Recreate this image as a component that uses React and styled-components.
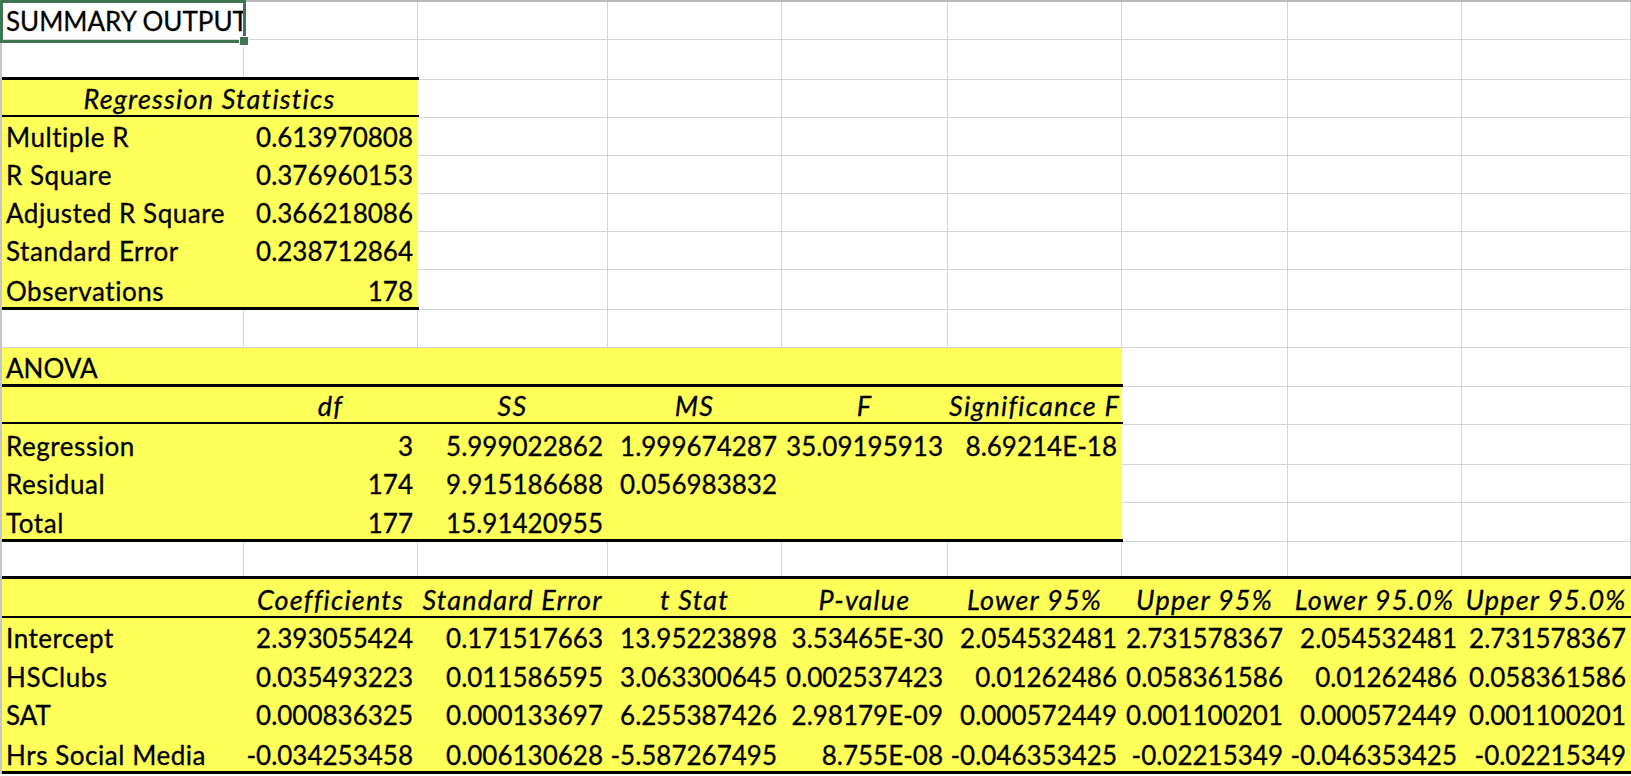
import React from "react";
import styled, { createGlobalStyle, css } from "styled-components";

const YELLOW = "#ffff59";
const GRID = "#d5d5d5";
const GREEN = "#3f7652";

// column widths include the 1px gridline on the right
const COLS = [242, 174, 190, 174, 166, 174, 166, 174, 169];
const ROWS = [38, 40, 38, 38, 38, 38, 38, 40, 38, 39, 38, 40, 38, 39, 37, 40, 38, 39, 38, 40];

const GlobalStyle = createGlobalStyle`
  html, body {
    margin: 0;
    padding: 0;
    background: #fff;
    overflow: hidden;
  }
  body {
    font-family: Lato, "Liberation Sans", sans-serif;
  }
`;

const Sheet = styled.div`
  position: relative;
  display: grid;
  grid-template-columns: ${COLS.map((w) => w + "px").join(" ")};
  grid-template-rows: ${ROWS.map((h) => h + "px").join(" ")};
  width: max-content;
  border-top: 2px solid #bababa;
  border-left: 2px solid #c6c6c6;
`;

const Cell = styled.div`
  position: relative;
  box-sizing: border-box;
  grid-column: span ${(p) => p.$span || 1};
  display: flex;
  align-items: flex-end;
  justify-content: ${(p) =>
    p.$align === "right" ? "flex-end" : p.$align === "center" ? "center" : "flex-start"};
  padding: 0 4px 3px 4px;
  background: ${(p) => (p.$fill ? YELLOW : "#fff")};
  border-right: 1px solid ${(p) => (p.$fill ? YELLOW : GRID)};
  border-bottom: 1px solid ${(p) => (p.$fill ? YELLOW : GRID)};
  color: #000;
  font-size: ${(p) => (p.$italic ? "27px" : "26px")};
  line-height: 30px;
  font-style: ${(p) => (p.$italic ? "italic" : "normal")};
  letter-spacing: ${(p) => (p.$italic ? "1.2px" : p.$wide ? "0.55px" : "0")};
  -webkit-text-stroke: 0.3px #000;
  white-space: nowrap;

  ${(p) =>
    p.$rule &&
    css`
      &::after {
        content: "";
        position: absolute;
        left: 0;
        right: -2px;
        bottom: ${p.$rule === "thick" ? "-1px" : "0"};
        height: ${p.$rule === "thick" ? "3px" : "2px"};
        background: #000;
        z-index: 1;
      }
    `}
`;

const Selection = styled.div`
  position: absolute;
  top: -2px;
  left: -2px;
  width: 246px;
  height: 43px;
  box-sizing: border-box;
  border: 3px solid ${GREEN};
  z-index: 2;
  pointer-events: none;
`;

const FillHandle = styled.div`
  position: absolute;
  right: -6px;
  bottom: -6px;
  width: 8px;
  height: 8px;
  background: ${GREEN};
  border: 1px solid #fff;
`;

const h = (t) => ({ t, head: true });

const rows = [
  { cells: ["SUMMARY OUTPUT"] },
  { rule: "thick", ruleCols: 2 },
  { fill: 2, rule: "thin", ruleCols: 2, cells: [{ t: "Regression Statistics", head: true, span: 2 }] },
  { fill: 2, cells: ["Multiple R", "0.613970808"] },
  { fill: 2, cells: ["R Square", "0.376960153"] },
  { fill: 2, cells: ["Adjusted R Square", "0.366218086"] },
  { fill: 2, cells: ["Standard Error", "0.238712864"] },
  { fill: 2, rule: "thick", ruleCols: 2, cells: ["Observations", "178"] },
  {},
  { fill: 6, rule: "thick", ruleCols: 6, cells: ["ANOVA"] },
  { fill: 6, rule: "thin", ruleCols: 6, cells: ["", h("df"), h("SS"), h("MS"), h("F"), h("Significance F")] },
  { fill: 6, cells: ["Regression", "3", "5.999022862", "1.999674287", "35.09195913", "8.69214E-18"] },
  { fill: 6, cells: ["Residual", "174", "9.915186688", "0.056983832"] },
  { fill: 6, rule: "thick", ruleCols: 6, cells: ["Total", "177", "15.91420955"] },
  { rule: "thick", ruleCols: 9 },
  {
    fill: 9,
    rule: "thin",
    ruleCols: 9,
    cells: [
      "",
      h("Coefficients"),
      h("Standard Error"),
      h("t Stat"),
      h("P-value"),
      h("Lower 95%"),
      h("Upper 95%"),
      h("Lower 95.0%"),
      h("Upper 95.0%"),
    ],
  },
  {
    fill: 9,
    cells: ["Intercept", "2.393055424", "0.171517663", "13.95223898", "3.53465E-30", "2.054532481", "2.731578367", "2.054532481", "2.731578367"],
  },
  {
    fill: 9,
    cells: ["HSClubs", "0.035493223", "0.011586595", "3.063300645", "0.002537423", "0.01262486", "0.058361586", "0.01262486", "0.058361586"],
  },
  {
    fill: 9,
    cells: ["SAT", "0.000836325", "0.000133697", "6.255387426", "2.98179E-09", "0.000572449", "0.001100201", "0.000572449", "0.001100201"],
  },
  {
    fill: 9,
    rule: "thick",
    ruleCols: 9,
    cells: ["Hrs Social Media", "-0.034253458", "0.006130628", "-5.587267495", "8.755E-08", "-0.046353425", "-0.02215349", "-0.046353425", "-0.02215349"],
  },
];

function buildRow(row, r) {
  const out = [];
  const cells = row.cells || [];
  let col = 0;
  let i = 0;
  while (col < COLS.length) {
    const raw = cells[i];
    const cell = raw == null ? { t: "" } : typeof raw === "string" ? { t: raw } : raw;
    const span = cell.span || 1;
    const align = cell.head ? "center" : col === 0 ? "left" : "right";
    // mixed-case labels run a little wider than Lato in the original
    const wide = col === 0 && !cell.head && cell.t !== cell.t.toUpperCase();
    out.push(
      <Cell
        key={`${r}-${col}`}
        $span={span}
        $align={align}
        $italic={cell.head}
        $wide={wide}
        $fill={col < (row.fill || 0)}
        $rule={col < (row.ruleCols || 0) ? row.rule : null}
      >
        {cell.t}
      </Cell>
    );
    col += span;
    i += 1;
  }
  return out;
}

export default function App() {
  return (
    <>
      <GlobalStyle />
      <Sheet>
        {rows.map((row, r) => buildRow(row, r))}
        <Selection>
          <FillHandle />
        </Selection>
      </Sheet>
    </>
  );
}
